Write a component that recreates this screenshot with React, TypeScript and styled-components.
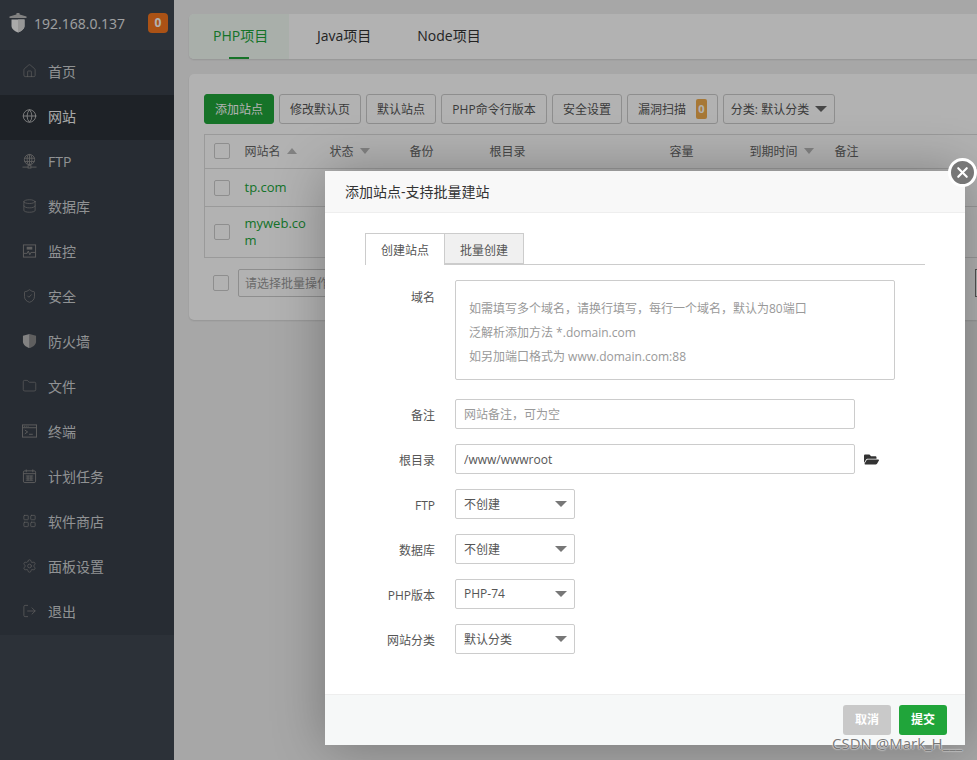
import React from "react";
import styled, { createGlobalStyle } from "styled-components";
import { Home, Globe, Database, ShieldCheck, Folder, LayoutGrid, Settings, LogOut, X } from "lucide-react";
import { FaFolderOpen } from "react-icons/fa";

const FONT = `"Open Sans", "Noto Sans CJK SC", sans-serif`;
const GREEN = "#20a53a";

const GlobalStyle = createGlobalStyle`
  html, body {
    margin: 0;
    height: 100%;
    overflow: hidden;
    font-family: ${FONT};
    font-size: 12px;
    color: #555;
  }
  * { box-sizing: border-box; }
`;

const Page = styled.div`
  position: relative;
  display: flex;
  width: 977px;
  height: 760px;
  overflow: hidden;
  background: #f0f0f0;
`;

const Aside = styled.aside`
  width: 174px;
  flex: none;
  background: #3f4751;
`;

const ServerHead = styled.div`
  display: flex;
  align-items: center;
  height: 50px;
  padding: 0 6px 4px 9px;
  color: #e4e6e8;
  font-size: 14px;
  svg { margin-right: 7px; }
`;

const ServerBadge = styled.span`
  margin-left: auto;
  width: 20px;
  height: 20px;
  border-radius: 4px;
  background: #f5761f;
  color: #fff;
  font-size: 12px;
  font-weight: 700;
  line-height: 20px;
  text-align: center;
`;

const Nav = styled.nav`
  background: #383f49;
`;

const NavItem = styled.div<{ $active?: boolean }>`
  display: flex;
  align-items: center;
  height: 45px;
  padding: 0 0 3px 22px;
  gap: 11px;
  font-size: 14px;
  color: ${(p) => (p.$active ? "#f2f2f2" : "#cfd2d4")};
  background: ${(p) => (p.$active ? "#2c3239" : "transparent")};
  svg {
    width: 15px;
    height: 16px;
    flex: none;
    color: ${(p) => (p.$active ? "#c8c8c8" : "#888")};
  }
`;

const Main = styled.main`
  flex: 1;
  min-width: 0;
  padding: 14px 0 0 15px;
`;

const TopTabs = styled.div`
  display: flex;
  height: 45px;
  margin-bottom: 15px;
  background: #fff;
  border-radius: 5px 0 0 5px;
  box-shadow: 0 1px 2px rgba(0, 0, 0, 0.12);
`;

const TopTab = styled.div<{ $active?: boolean }>`
  position: relative;
  width: ${(p) => (p.$active ? "100px" : "auto")};
  padding: 0 22px 0 24px;
  margin-right: ${(p) => (p.$active ? "4px" : "0")};
  font-size: 14px;
  line-height: 44px;
  white-space: nowrap;
  color: ${(p) => (p.$active ? GREEN : "#333")};
  background: ${(p) => (p.$active ? "#f2fbf4" : "transparent")};
  border-radius: 5px 0 0 5px;
  &::after {
    content: "";
    display: ${(p) => (p.$active ? "block" : "none")};
    position: absolute;
    left: 40px;
    bottom: 0;
    width: 20px;
    height: 2px;
    background: ${GREEN};
  }
`;

const Card = styled.section`
  height: 246px;
  padding: 20px 0 0 15px;
  background: #fff;
  border-radius: 5px 0 0 5px;
  box-shadow: 0 1px 2px rgba(0, 0, 0, 0.12);
`;

const Toolbar = styled.div`
  display: flex;
  gap: 5px;
  margin-bottom: 10px;
`;

const ToolButton = styled.div<{ $primary?: boolean; $width: number }>`
  display: flex;
  align-items: center;
  justify-content: center;
  width: ${(p) => p.$width}px;
  height: 30px;
  border: 1px solid ${(p) => (p.$primary ? GREEN : "#ccc")};
  border-radius: 3px;
  background: ${(p) => (p.$primary ? GREEN : "#fff")};
  color: ${(p) => (p.$primary ? "#fff" : "#555")};
  white-space: nowrap;
`;

const ScanCount = styled.span`
  margin-left: 10px;
  width: 11px;
  height: 20px;
  border-radius: 2px;
  background: #f0ad4e;
  color: #fff;
  font-size: 11px;
  font-weight: 700;
  line-height: 20px;
  text-align: center;
`;

const Caret = styled.i<{ $up?: boolean; $color?: string; $size?: number }>`
  display: inline-block;
  width: 0;
  height: 0;
  margin-left: 6px;
  border-left: ${(p) => p.$size || 5}px solid transparent;
  border-right: ${(p) => p.$size || 5}px solid transparent;
  ${(p) => (p.$up ? "border-bottom" : "border-top")}: 6px solid ${(p) => p.$color || "#bbb"};
  vertical-align: 2px;
`;

const SiteTable = styled.table`
  table-layout: fixed;
  width: 773px;
  border-collapse: collapse;
  border: 1px solid #ddd;
  border-right: 0;
  th, td {
    padding: 0 9px;
    border-bottom: 1px solid #ddd;
    text-align: left;
    font-weight: 400;
  }
  th { height: 34px; padding-bottom: 1px; color: #666; }
`;

const SiteRow = styled.tr<{ $height: number }>`
  height: ${(p) => p.$height}px;
`;

const SiteLink = styled.td`
  color: ${GREEN};
  font-size: 13px;
  line-height: 17px;
  word-break: break-all;
`;

const Check = styled.span`
  display: block;
  flex: none;
  width: 16px;
  height: 16px;
  border: 1px solid #ccc;
  border-radius: 2px;
  background: #fff;
`;

const BatchBar = styled.div`
  display: flex;
  align-items: center;
  margin-top: 11px;
  padding-left: 9px;
  gap: 9px;
`;

const BatchInput = styled.input`
  flex: none;
  width: 170px;
  height: 28px;
  padding: 0 6px;
  border: 1px solid #ccc;
  border-radius: 2px;
  font: 12px ${FONT};
  &::placeholder { color: #999; }
`;

const PageBox = styled.span`
  flex: none;
  width: 30px;
  height: 28px;
  margin-left: 558px;
  border: 1px solid #777;
`;

const Overlay = styled.div`
  position: absolute;
  inset: 0;
  background: rgba(0, 0, 0, 0.3);
`;

const Modal = styled.div`
  position: absolute;
  left: 325px;
  top: 171px;
  display: flex;
  flex-direction: column;
  width: 640px;
  height: 574px;
  background: #fff;
  box-shadow: 1px 1px 50px rgba(0, 0, 0, 0.3);
`;

const ModalTitle = styled.div`
  height: 42px;
  padding-left: 20px;
  border-bottom: 1px solid #eee;
  background: #f8f8f8;
  color: #333;
  font-size: 14px;
  line-height: 41px;
`;

const CloseButton = styled.div`
  position: absolute;
  right: -12px;
  top: -13px;
  display: flex;
  align-items: center;
  justify-content: center;
  width: 29px;
  height: 29px;
  border: 3px solid #fff;
  border-radius: 50%;
  background: #777;
  color: #fff;
`;

const ModalBody = styled.div`
  flex: 1;
  padding: 20px 40px 0;
`;

const FormTabs = styled.div`
  display: flex;
  height: 32px;
  margin-bottom: 15px;
  border-bottom: 1px solid #ccc;
`;

const FormTab = styled.div<{ $active?: boolean }>`
  width: ${(p) => (p.$active ? "80px" : "79px")};
  height: ${(p) => (p.$active ? "32px" : "31px")};
  border: 1px solid #ccc;
  border-left-width: ${(p) => (p.$active ? "1px" : "0")};
  border-bottom: ${(p) => (p.$active ? "0" : "1px solid #ccc")};
  background: ${(p) => (p.$active ? "#fff" : "#f0f0f0")};
  color: #555;
  line-height: 33px;
  text-align: center;
`;

const FormRow = styled.div<{ $gap?: number }>`
  display: flex;
  height: ${(p) => (p.$gap ? "100px" : "30px")};
  margin-left: -40px;
  margin-bottom: ${(p) => p.$gap ?? 15}px;
`;

const FieldLabel = styled.label<{ $tall?: boolean }>`
  width: 110px;
  margin-right: 20px;
  flex: none;
  color: #555;
  line-height: ${(p) => (p.$tall ? "36px" : "33px")};
  text-align: right;
`;

const DomainBox = styled.div`
  width: 440px;
  height: 100px;
  padding: 16px 13px;
  border: 1px solid #ccc;
  border-radius: 2px;
  color: #999;
  line-height: 24px;
`;

const TextField = styled.input`
  width: 400px;
  height: 30px;
  padding: 0 8px;
  border: 1px solid #ccc;
  border-radius: 2px;
  outline: 0;
  color: #555;
  font: 12px ${FONT};
  &::placeholder { color: #999; }
`;

const FolderButton = styled.span`
  display: flex;
  align-items: center;
  margin-left: 9px;
  color: #333;
`;

const SelectBox = styled.div`
  display: flex;
  align-items: center;
  justify-content: space-between;
  width: 120px;
  height: 30px;
  padding: 0 7px 1px 8px;
  border: 1px solid #ccc;
  border-radius: 2px;
  color: #555;
`;

const ModalFoot = styled.div`
  display: flex;
  justify-content: flex-end;
  gap: 8px;
  height: 51px;
  padding: 10px 18px 0 0;
  border-top: 1px solid #eee;
  background: #f6f8f8;
`;

const FootButton = styled.div<{ $primary?: boolean }>`
  width: 48px;
  height: 30px;
  border-radius: 3px;
  background: ${(p) => (p.$primary ? GREEN : "#c9c9c9")};
  color: #fff;
  font-weight: 700;
  line-height: 30px;
  text-align: center;
`;

const Watermark = styled.div`
  position: absolute;
  left: 832px;
  top: 733px;
  color: #777;
  font-size: 15px;
  text-shadow: 0 0 2px #fff, 0 0 1px #fff;
  white-space: nowrap;
`;

const LogoIcon = () => (
  <svg width="18" height="20" viewBox="0 0 18 20">
    <path d="M0.5 3.5 L9 1 L17.5 3.5 L17.5 5 L0.5 5 Z" fill="#bbb" />
    <path d="M7.5 0h3v2h-3z" fill="#bbb" />
    <path d="M2.5 6.5 H15.5 V13 C15.5 16 12 18.5 9 19.5 C6 18.5 2.5 16 2.5 13 Z" fill="#f4f4f4" />
    <path d="M9 6.5 H15.5 V13 C15.5 16 12 18.5 9 19.5 Z" fill="#d8d8d8" />
  </svg>
);

const FtpIcon = () => (
  <svg viewBox="0 0 16 16" fill="none" stroke="currentColor" strokeWidth="1">
    <circle cx="8" cy="6.5" r="5.5" />
    <ellipse cx="8" cy="6.5" rx="2.5" ry="5.5" />
    <path d="M2.5 5h11M2.5 8.5h11M8 1v11M0.5 14.5h6M9.5 14.5h6" />
    <rect x="6.5" y="13" width="3" height="2.5" />
  </svg>
);

const MonitorIcon = () => (
  <svg viewBox="0 0 16 16" fill="none" stroke="currentColor" strokeWidth="1">
    <rect x="1.5" y="1.5" width="13" height="13" />
    <path d="M2 10.5h3.5l1.2-2.5 1.6 4 1.2-2.5 4.5 0" />
    <path d="M5 3.5h6v3H5z" fill="currentColor" strokeWidth="0" />
  </svg>
);

const WallIcon = () => (
  <svg viewBox="0 0 16 16">
    <path d="M8 0.5 L15 2.5 V8.5 C15 12 11.5 14.5 8 15.5 Z" fill="#888" />
    <path d="M8 0.5 L1 2.5 V8.5 C1 12 4.5 14.5 8 15.5 Z" fill="#bbb" />
  </svg>
);

const TerminalIcon = () => (
  <svg viewBox="0 0 16 16" fill="none" stroke="currentColor" strokeWidth="1">
    <rect x="0.5" y="1.5" width="15" height="13" />
    <path d="M0.5 4.5h15M3 7l3 2-3 2M7.5 11.5h4" />
    <path d="M2 3h1M4 3h1M6 3h1" />
  </svg>
);

const PlanIcon = () => (
  <svg viewBox="0 0 16 16" fill="none" stroke="currentColor" strokeWidth="1">
    <rect x="1.5" y="2.5" width="13" height="12.5" rx="1.5" />
    <path d="M1.5 5.5h13M4.5 1v3M11.5 1v3M4 8h8M4 10.2h8M4 12.4h8M6.4 7.5v5.5M9.6 7.5v5.5" />
  </svg>
);

const menu: { label: string; icon: React.ReactNode; active?: boolean }[] = [
  { label: "首页", icon: <Home strokeWidth={1.1} /> },
  { label: "网站", icon: <Globe strokeWidth={1.3} />, active: true },
  { label: "FTP", icon: <FtpIcon /> },
  { label: "数据库", icon: <Database strokeWidth={1.2} /> },
  { label: "监控", icon: <MonitorIcon /> },
  { label: "安全", icon: <ShieldCheck strokeWidth={1.2} /> },
  { label: "防火墙", icon: <WallIcon /> },
  { label: "文件", icon: <Folder strokeWidth={1.1} /> },
  { label: "终端", icon: <TerminalIcon /> },
  { label: "计划任务", icon: <PlanIcon /> },
  { label: "软件商店", icon: <LayoutGrid strokeWidth={1.2} /> },
  { label: "面板设置", icon: <Settings strokeWidth={1.1} /> },
  { label: "退出", icon: <LogOut strokeWidth={1.2} /> },
];

const selects = [
  { label: "FTP", value: "不创建" },
  { label: "数据库", value: "不创建" },
  { label: "PHP版本", value: "PHP-74" },
  { label: "网站分类", value: "默认分类" },
];

const App: React.FC = () => (
  <Page>
    <GlobalStyle />
    <Aside>
      <ServerHead>
        <LogoIcon />
        192.168.0.137
        <ServerBadge>0</ServerBadge>
      </ServerHead>
      <Nav>
        {menu.map((item) => (
          <NavItem key={item.label} $active={item.active}>
            {item.icon}
            {item.label}
          </NavItem>
        ))}
      </Nav>
    </Aside>

    <Main>
      <TopTabs>
        <TopTab $active>PHP项目</TopTab>
        <TopTab>Java项目</TopTab>
        <TopTab>Node项目</TopTab>
      </TopTabs>
      <Card>
        <Toolbar>
          <ToolButton $primary $width={70}>添加站点</ToolButton>
          <ToolButton $width={82}>修改默认页</ToolButton>
          <ToolButton $width={70}>默认站点</ToolButton>
          <ToolButton $width={106}>PHP命令行版本</ToolButton>
          <ToolButton $width={70}>安全设置</ToolButton>
          <ToolButton $width={91}>
            漏洞扫描<ScanCount>0</ScanCount>
          </ToolButton>
          <ToolButton $width={112}>
            分类: 默认分类
            <Caret $color="#666" $size={6} />
          </ToolButton>
        </Toolbar>
        <SiteTable>
          <colgroup>
            <col width="31" />
            <col width="85" />
            <col width="80" />
            <col width="80" />
            <col width="180" />
            <col width="80" />
            <col width="85" />
            <col />
          </colgroup>
          <thead>
            <tr>
              <th><Check /></th>
              <th>网站名<Caret $up /></th>
              <th>状态<Caret /></th>
              <th>备份</th>
              <th>根目录</th>
              <th>容量</th>
              <th>到期时间<Caret /></th>
              <th>备注</th>
            </tr>
          </thead>
          <tbody>
            <SiteRow $height={38}>
              <td><Check /></td>
              <SiteLink>tp.com</SiteLink>
              <td colSpan={6} />
            </SiteRow>
            <SiteRow $height={51}>
              <td><Check /></td>
              <SiteLink>myweb.com</SiteLink>
              <td colSpan={6} />
            </SiteRow>
          </tbody>
        </SiteTable>
        <BatchBar>
          <Check />
          <BatchInput placeholder="请选择批量操作" readOnly />
          <PageBox />
        </BatchBar>
      </Card>
    </Main>

    <Overlay />

    <Modal>
      <ModalTitle>添加站点-支持批量建站</ModalTitle>
      <CloseButton>
        <X size={17} strokeWidth={3} />
      </CloseButton>
      <ModalBody>
        <FormTabs>
          <FormTab $active>创建站点</FormTab>
          <FormTab>批量创建</FormTab>
        </FormTabs>
        <FormRow $gap={19}>
          <FieldLabel $tall>域名</FieldLabel>
          <DomainBox>
            如需填写多个域名，请换行填写，每行一个域名，默认为80端口
            <br />
            泛解析添加方法 *.domain.com
            <br />
            如另加端口格式为 www.domain.com:88
          </DomainBox>
        </FormRow>
        <FormRow>
          <FieldLabel>备注</FieldLabel>
          <TextField placeholder="网站备注，可为空" readOnly />
        </FormRow>
        <FormRow>
          <FieldLabel>根目录</FieldLabel>
          <TextField value="/www/wwwroot" readOnly />
          <FolderButton>
            <FaFolderOpen size={15} />
          </FolderButton>
        </FormRow>
        {selects.map((row) => (
          <FormRow key={row.label}>
            <FieldLabel>{row.label}</FieldLabel>
            <SelectBox>
              {row.value}
              <Caret $color="#777" $size={6} />
            </SelectBox>
          </FormRow>
        ))}
      </ModalBody>
      <ModalFoot>
        <FootButton>取消</FootButton>
        <FootButton $primary>提交</FootButton>
      </ModalFoot>
    </Modal>

    <Watermark>CSDN @Mark_H___</Watermark>
  </Page>
);

export default App;
